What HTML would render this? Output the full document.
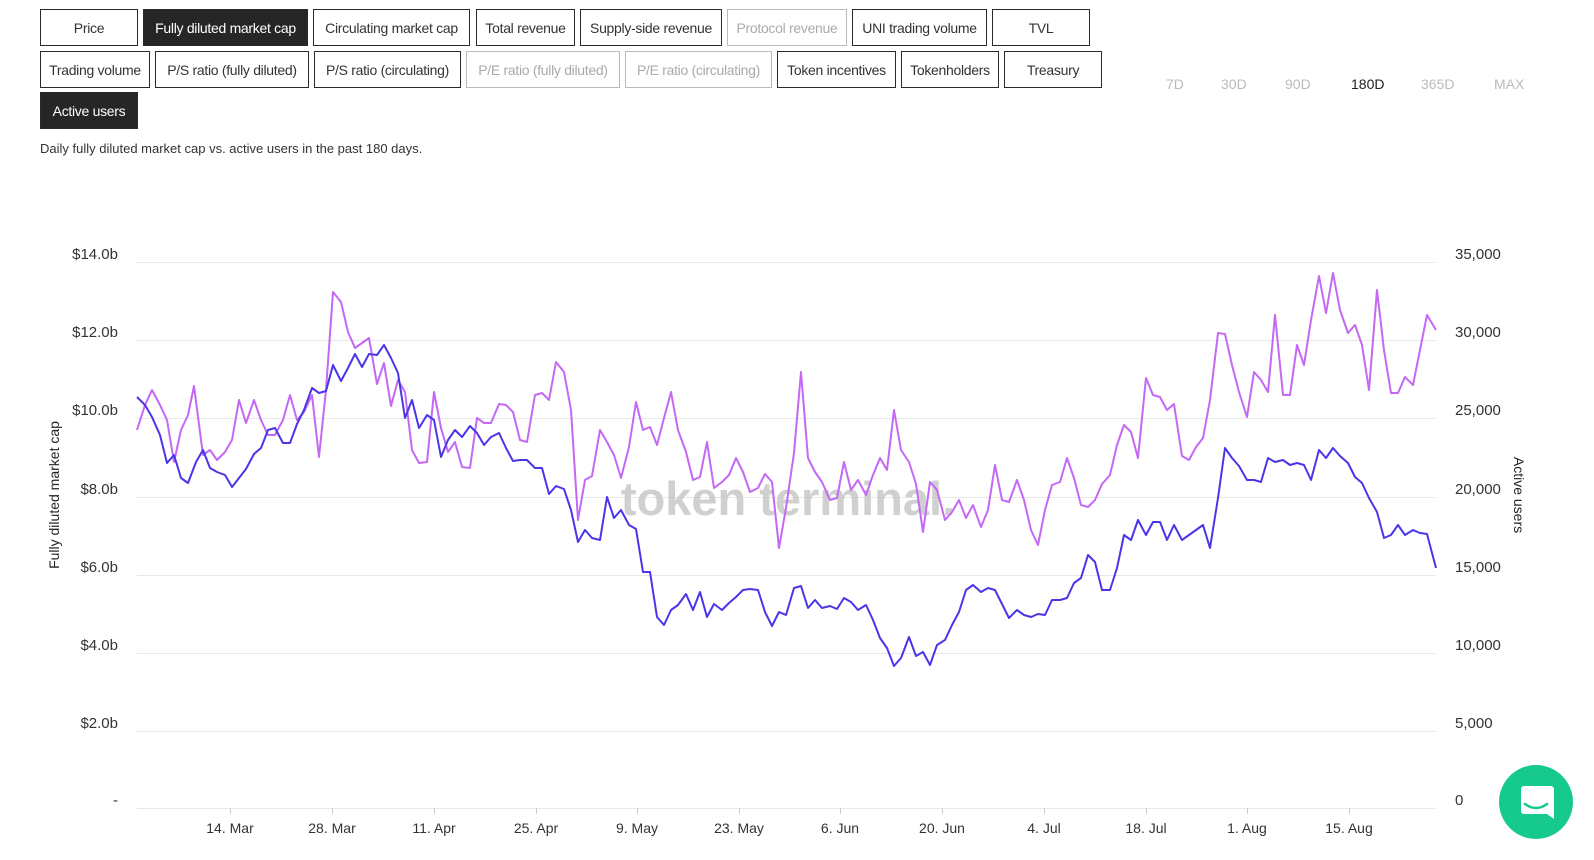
<!DOCTYPE html>
<html><head><meta charset="utf-8">
<style>
*{margin:0;padding:0;box-sizing:border-box}
body{width:1594px;height:860px;background:#fff;font-family:"Liberation Sans",sans-serif;color:#222;position:relative;overflow:hidden}
.b{position:absolute;height:37px;border:1px solid #2a2a2a;font-size:14px;display:flex;align-items:center;justify-content:center;white-space:nowrap;letter-spacing:-0.3px;color:#333}
.b.on{background:#262626;color:#fff}
.b.g{border-color:#bbb;color:#aaa}
.t{position:absolute;top:76px;font-size:14px;color:#bbb}
</style></head><body>
<div class="b" style="left:40px;top:9px;width:98px">Price</div>
<div class="b on" style="left:143px;top:9px;width:165px">Fully diluted market cap</div>
<div class="b" style="left:313px;top:9px;width:157px">Circulating market cap</div>
<div class="b" style="left:476px;top:9px;width:99px">Total revenue</div>
<div class="b" style="left:580px;top:9px;width:142px">Supply-side revenue</div>
<div class="b g" style="left:727px;top:9px;width:120px">Protocol revenue</div>
<div class="b" style="left:852px;top:9px;width:135px">UNI trading volume</div>
<div class="b" style="left:992px;top:9px;width:98px">TVL</div>
<div class="b" style="left:40px;top:51px;width:110px">Trading volume</div>
<div class="b" style="left:155px;top:51px;width:154px">P/S ratio (fully diluted)</div>
<div class="b" style="left:314px;top:51px;width:147px">P/S ratio (circulating)</div>
<div class="b g" style="left:466px;top:51px;width:154px">P/E ratio (fully diluted)</div>
<div class="b g" style="left:625px;top:51px;width:147px">P/E ratio (circulating)</div>
<div class="b" style="left:777px;top:51px;width:119px">Token incentives</div>
<div class="b" style="left:901px;top:51px;width:98px">Tokenholders</div>
<div class="b" style="left:1004px;top:51px;width:98px">Treasury</div>
<div class="b on" style="left:40px;top:92px;width:98px">Active users</div>
<div class="t" style="left:1166px">7D</div>
<div class="t" style="left:1221px">30D</div>
<div class="t" style="left:1285px">90D</div>
<div class="t" style="left:1351px;color:#222">180D</div>
<div class="t" style="left:1421px">365D</div>
<div class="t" style="left:1494px">MAX</div>
<div style="position:absolute;left:40px;top:141px;font-size:13px;color:#333">Daily fully diluted market cap vs. active users in the past 180 days.</div>
<svg style="position:absolute;left:0;top:0" width="1594" height="860" font-family="Liberation Sans, sans-serif">
<g stroke="#e8e8e8" stroke-width="1">
<line x1="137" x2="1436" y1="262.5" y2="262.5"/><line x1="137" x2="1436" y1="340.5" y2="340.5"/><line x1="137" x2="1436" y1="418.5" y2="418.5"/><line x1="137" x2="1436" y1="497.5" y2="497.5"/><line x1="137" x2="1436" y1="575.5" y2="575.5"/><line x1="137" x2="1436" y1="653.5" y2="653.5"/><line x1="137" x2="1436" y1="731.5" y2="731.5"/><line x1="137" x2="1436" y1="808.5" y2="808.5"/>
</g>
<g stroke="#ccc"><line x1="230.5" x2="230.5" y1="808" y2="814"/><line x1="332.5" x2="332.5" y1="808" y2="814"/><line x1="434.5" x2="434.5" y1="808" y2="814"/><line x1="536.5" x2="536.5" y1="808" y2="814"/><line x1="637.5" x2="637.5" y1="808" y2="814"/><line x1="739.5" x2="739.5" y1="808" y2="814"/><line x1="840.5" x2="840.5" y1="808" y2="814"/><line x1="942.5" x2="942.5" y1="808" y2="814"/><line x1="1044.5" x2="1044.5" y1="808" y2="814"/><line x1="1146.5" x2="1146.5" y1="808" y2="814"/><line x1="1247.5" x2="1247.5" y1="808" y2="814"/><line x1="1349.5" x2="1349.5" y1="808" y2="814"/></g>
<g font-size="15" fill="#333" text-anchor="end">
<text x="118" y="259">$14.0b</text><text x="118" y="337">$12.0b</text><text x="118" y="415">$10.0b</text><text x="118" y="494">$8.0b</text><text x="118" y="572">$6.0b</text><text x="118" y="650">$4.0b</text><text x="118" y="728">$2.0b</text><text x="118" y="805">-</text>
</g>
<g font-size="15" fill="#333">
<text x="1455" y="259">35,000</text><text x="1455" y="337">30,000</text><text x="1455" y="415">25,000</text><text x="1455" y="494">20,000</text><text x="1455" y="572">15,000</text><text x="1455" y="650">10,000</text><text x="1455" y="728">5,000</text><text x="1455" y="805">0</text>
</g>
<g font-size="14" fill="#333" text-anchor="middle">
<text x="230" y="833">14. Mar</text><text x="332" y="833">28. Mar</text><text x="434" y="833">11. Apr</text><text x="536" y="833">25. Apr</text><text x="637" y="833">9. May</text><text x="739" y="833">23. May</text><text x="840" y="833">6. Jun</text><text x="942" y="833">20. Jun</text><text x="1044" y="833">4. Jul</text><text x="1146" y="833">18. Jul</text><text x="1247" y="833">1. Aug</text><text x="1349" y="833">15. Aug</text>
</g>
<text transform="translate(59,495) rotate(-90)" font-size="14" fill="#222" text-anchor="middle">Fully diluted market cap</text>
<text transform="translate(1514,495) rotate(90)" font-size="14" fill="#222" text-anchor="middle">Active users</text>
<text x="788" y="515" font-size="47" font-weight="bold" fill="#c8c8c8" text-anchor="middle" opacity="0.85">token terminal.</text>
<polyline fill="none" stroke="#c468f5" stroke-width="2" stroke-linejoin="round" points="137,430 145,405 152,390 160,405 167,420 174,462 181,430 188,415 194,386 203,455 210,450 217,460 225,452 232,440 239,400 246,423 254,400 261,420 268,435 275,435 283,420 290,395 297,420 304,412 312,395 319,457 326,390 333,292 341,302 348,332 355,348 362,343 369,338 377,384 384,363 391,406 398,380 405,392 412,450 419,463 427,462 434,392 441,428 448,452 455,442 462,467 470,468 477,418 484,423 491,423 499,404 506,405 513,412 520,440 527,442 535,395 542,393 549,400 556,362 564,372 571,410 578,520 585,480 592,476 600,430 607,442 614,455 621,478 629,447 636,402 643,430 650,427 657,445 664,418 671,392 678,430 686,452 693,480 700,477 707,442 714,488 722,482 729,475 736,458 743,472 750,492 758,488 765,474 772,482 779,548 786,508 794,453 801,372 808,458 815,472 822,482 830,500 837,498 844,462 851,490 858,480 866,495 873,475 880,458 887,470 894,410 901,450 909,462 916,484 923,532 930,482 937,490 945,520 952,512 959,500 966,518 973,505 981,527 988,510 995,465 1002,500 1009,502 1017,480 1024,500 1031,530 1038,545 1045,510 1052,485 1060,482 1067,458 1074,478 1081,505 1088,507 1095,500 1102,484 1110,475 1117,445 1124,425 1131,432 1138,458 1146,378 1153,395 1160,397 1167,410 1174,404 1182,456 1189,460 1196,447 1203,438 1210,400 1218,333 1225,334 1232,365 1239,392 1247,417 1254,372 1261,380 1268,392 1275,315 1283,395 1290,395 1297,345 1304,365 1311,320 1319,276 1326,313 1333,273 1340,310 1348,333 1355,325 1362,345 1369,390 1377,290 1384,350 1391,393 1398,393 1405,377 1413,385 1420,350 1427,315 1436,330"/>
<polyline fill="none" stroke="#4a35e8" stroke-width="2" stroke-linejoin="round" points="137,397 145,405 152,417 160,435 167,463 174,455 181,478 188,483 196,462 203,450 210,468 217,472 225,475 232,487 239,478 246,469 254,454 261,448 268,430 275,428 283,443 290,443 297,424 304,410 312,388 319,393 326,391 333,365 341,381 348,368 355,354 362,367 369,354 377,355 384,345 391,358 398,373 405,418 412,400 419,428 427,415 434,420 441,457 448,440 455,430 462,437 470,426 477,433 484,445 491,437 499,433 506,448 513,461 520,460 527,460 535,468 542,468 549,494 556,486 564,489 571,510 578,542 585,530 592,538 600,540 607,497 614,518 621,510 629,525 636,529 643,572 650,572 657,617 664,625 671,610 678,605 686,594 693,610 700,592 707,617 714,604 722,610 729,603 736,597 743,590 750,589 758,590 765,612 772,626 779,612 786,615 794,588 801,586 808,608 815,600 822,608 830,606 837,609 844,598 851,602 858,610 866,605 873,620 880,638 887,648 894,666 901,658 909,637 916,656 923,652 930,665 937,645 945,640 952,625 959,612 966,590 973,585 981,592 988,588 995,590 1002,604 1009,618 1017,610 1024,615 1031,617 1038,614 1045,615 1052,600 1060,600 1067,598 1074,583 1081,578 1088,555 1095,562 1102,590 1110,590 1117,568 1124,535 1131,540 1138,520 1146,535 1153,522 1160,522 1167,540 1174,525 1182,540 1189,535 1196,530 1203,525 1210,548 1218,498 1225,448 1232,458 1239,466 1247,480 1254,480 1261,482 1268,458 1275,462 1283,460 1290,465 1297,463 1304,465 1311,480 1319,450 1326,458 1333,448 1340,456 1348,463 1355,477 1362,483 1369,498 1377,512 1384,538 1391,535 1398,525 1405,535 1413,530 1420,533 1427,534 1436,568"/>
<circle cx="1536" cy="802" r="37" fill="#16c98d"/>
<path d="M1521,789 a3,3 0 0 1 3,-3 h27 a3,3 0 0 1 3,3 v30 l-7,-5 h-23 a3,3 0 0 1 -3,-3z" fill="#fff"/>
<path d="M1525,804 q11,8 22,0" fill="none" stroke="#16c98d" stroke-width="2.5" stroke-linecap="round"/>
</svg>
</body></html>
